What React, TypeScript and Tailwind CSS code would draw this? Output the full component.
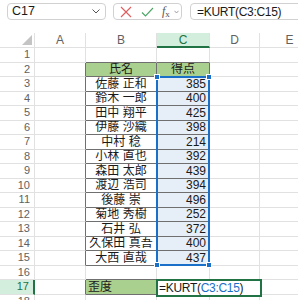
import React from "react";

const names = [
  "佐藤 正和",
  "鈴木 一郎",
  "田中 翔平",
  "伊藤 沙織",
  "中村 稔",
  "小林 直也",
  "森田 太郎",
  "渡辺 浩司",
  "後藤 崇",
  "菊地 秀樹",
  "石井 弘",
  "久保田 真吾",
  "大西 直哉",
];
const scores = [385, 400, 425, 398, 214, 392, 439, 394, 496, 252, 372, 400, 437];

const cols = ["A", "B", "C", "D", "E"];
const rows = Array.from({ length: 18 }, (_, i) => i + 1);

function Cell({ r, c }: { r: number; c: string }) {
  const inTable = r >= 2 && r <= 15;
  let cls = "border-r border-b border-[#e1e1e1] flex items-center overflow-hidden whitespace-nowrap";
  let content: React.ReactNode = null;
  if (c === "A") {
    if (inTable || r === 17) cls += " border-r-[#6f6f6f]";
  } else if (c === "B") {
    if (r === 1 || r === 16) cls += " border-b-[#6f6f6f]";
    if (inTable || r === 17) cls += " border-r-[#6f6f6f] border-b-[#6f6f6f]";
    if (r === 2 || r === 17) cls += " bg-[#a9d08e]";
    if (r === 2) {
      cls += " justify-center";
      content = "氏名";
    } else if (r >= 3 && r <= 15) {
      cls += " justify-center";
      content = names[r - 3];
    } else if (r === 17) {
      cls += " pl-[2px]";
      content = "歪度";
    }
  } else if (c === "C") {
    if (r === 1) cls += " border-b-[#6f6f6f]";
    if (inTable) cls += " border-r-[#6f6f6f] border-b-[#6f6f6f]";
    if (r === 2) {
      cls += " bg-[#a9d08e] justify-center";
      content = "得点";
    } else if (r >= 3 && r <= 15) {
      cls += " bg-[#e6eef8] justify-end pr-[3px] text-[11px]";
      content = scores[r - 3];
    }
  }
  return <div className={cls + " text-[12px] leading-none text-[#1a1a1a]"}>{content}</div>;
}

export default function App() {
  return (
    <div
      className="w-[298px] h-[300px] overflow-hidden bg-white relative"
      style={{ fontFamily: '"Liberation Sans", "Noto Sans CJK JP", sans-serif' }}
    >
      {/* formula bar */}
      <div className="h-[33px] flex items-start pt-[3px] pl-[7px]">
        <div className="w-[99px] h-[17px] border border-[#d1d1d1] rounded-[4px] flex items-center justify-between pl-[4px] pr-[5px] shrink-0">
          <span className="text-[12.5px] text-[#1a1a1a] leading-none">C17</span>
          <svg width="8" height="5" viewBox="0 0 8 5">
            <path d="M0.5 0.5 L4 4 L7.5 0.5" fill="none" stroke="#555" strokeWidth="1" />
          </svg>
        </div>
        <div className="ml-[7px] w-[69px] h-[17px] border border-[#d1d1d1] rounded-[4px] flex items-center pl-[6px] shrink-0">
          <svg width="12" height="12" viewBox="0 0 12 12">
            <path d="M1 1 L11 11 M11 1 L1 11" stroke="#e35b5b" strokeWidth="1.1" />
          </svg>
          <svg width="13" height="12" viewBox="0 0 13 12" className="ml-[9px]">
            <path d="M1 6.5 L4.5 10 L12 2" fill="none" stroke="#4aa564" strokeWidth="1.1" />
          </svg>
          <span
            className="ml-[8px] text-[12px] italic text-[#555] leading-none"
            style={{ fontFamily: '"Liberation Serif", serif' }}
          >
            f<span className="text-[9px] not-italic align-[-2px]">x</span>
          </span>
          <svg width="5" height="4" viewBox="0 0 5 4" className="ml-[4px]">
            <path d="M0.5 0.8 L2.5 3 L4.5 0.8" fill="none" stroke="#888" strokeWidth="0.8" />
          </svg>
        </div>
        <div className="ml-[8px] w-[120px] h-[17px] border border-[#d1d1d1] rounded-[4px] flex items-center pl-[6px] shrink-0">
          <span className="text-[12px] text-[#1a1a1a] leading-none tracking-[-0.3px]">=KURT(C3:C15)</span>
        </div>
      </div>

      {/* sheet */}
      <div className="relative grid w-[320px] grid-cols-[35px_51px_71px_53px_50px_60px] grid-rows-[15px_repeat(18,14.5px)]">
        {/* header row */}
        <div className="border-r border-b border-[#e1e1e1] flex items-end justify-end pr-[2px] pb-[2px]">
          <svg width="10" height="10" viewBox="0 0 10 10">
            <path d="M10 0 L10 10 L0 10 Z" fill="#c4c4c4" />
          </svg>
        </div>
        {cols.map((c) => (
          <div
            key={c}
            className={
              c === "C"
                ? "bg-[#d3eedd] border-r border-[#e1e1e1] border-b-2 border-b-[#217346] flex items-center justify-center text-[12px] text-[#217346] leading-none"
                : "border-r border-b border-[#e1e1e1] flex items-center justify-center text-[12px] text-[#616161] leading-none"
            }
          >
            {c}
          </div>
        ))}

        {rows.map((r) => (
          <React.Fragment key={r}>
            <div
              className={
                r === 17
                  ? "bg-[#d3eedd] border-b border-[#e1e1e1] border-r-2 border-r-[#217346] flex items-center justify-end pr-[4px] text-[11px] text-[#217346] leading-none"
                  : "border-r border-b border-[#e1e1e1] flex items-center justify-end pr-[4px] text-[11px] text-[#616161] leading-none"
              }
            >
              {r}
            </div>
            {cols.map((c) => (
              <Cell key={c} r={r} c={c} />
            ))}
          </React.Fragment>
        ))}

        {/* reference highlight C3:C15 */}
        <div className="absolute left-[156px] top-[43px] w-[54px] h-[190px] border-2 border-[#1a6fc9] pointer-events-none" />
        <div className="absolute left-[154px] top-[41px] w-[6px] h-[6px] bg-[#1a6fc9] border border-white" />
        <div className="absolute left-[206px] top-[41px] w-[6px] h-[6px] bg-[#1a6fc9] border border-white" />
        <div className="absolute left-[154px] top-[229px] w-[6px] h-[6px] bg-[#1a6fc9] border border-white" />
        <div className="absolute left-[206px] top-[229px] w-[6px] h-[6px] bg-[#1a6fc9] border border-white" />

        {/* editing cell C17 */}
        <div className="absolute left-[156px] top-[246px] w-[106px] h-[18px] border-2 border-[#217346] bg-white flex items-center pl-[1px] text-[12px] leading-none text-[#1a1a1a] tracking-[-0.3px]">
          =KURT(<span className="text-[#1a6fc9]">C3:C15</span>)
        </div>
      </div>
    </div>
  );
}
